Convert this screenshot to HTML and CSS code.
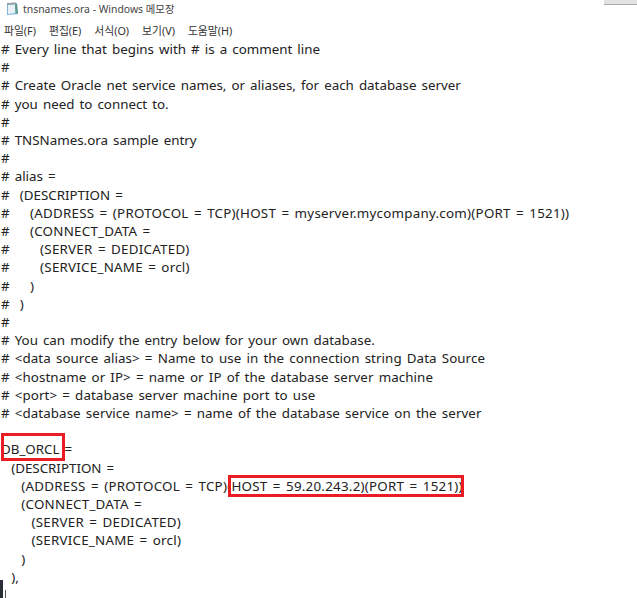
FILE: index.html
```html
<!DOCTYPE html>
<html lang="ko">
<head>
    <meta charset="UTF-8">
    <title>tnsnames.ora - Windows 메모장</title>
    <link rel="stylesheet" href="styles.css">
</head>
<body>
    <header class="titlebar">
        <svg class="app-icon" width="14" height="14" viewBox="0 0 14 14">
            <path d="M2 2 L12 1 L13 12 L2 13 Z" fill="#7fb4dc"/>
            <path d="M3 3 L10 2.500 L10.500 11 L3 12 Z" fill="#e8f1f6"/>
            <path d="M10 2.500 L12 2 L13 12 L10.500 11 Z" fill="#5f9a8c"/>
            <path d="M2 1 L11 0.500 L11 2 L2 2.500 Z" fill="#9a9a9a"/>
        </svg>
        <span class="title">tnsnames.ora - Windows 메모장</span>
        <span class="title-close"></span>
    </header>
    <nav class="menu">
        <span>파일(F)</span>
        <span>편집(E)</span>
        <span>서식(O)</span>
        <span>보기(V)</span>
        <span>도움말(H)</span>
    </nav>
    <main class="editor">
<pre class="text"># Every line that begins with # is a comment line
#
# Create Oracle net service names, or aliases, for each database server
# you need to connect to.
#
# TNSNames.ora sample entry
#
# alias =
#  (DESCRIPTION =
#    <span class="cfg">(ADDRESS = (PROTOCOL = TCP)(HOST = myserver.mycompany.com)(PORT = 1521))</span>
#    <span class="cfg">(CONNECT_DATA =</span>
#      <span class="cfg">(SERVER = DEDICATED)</span>
#      <span class="cfg">(SERVICE_NAME = orcl)</span>
#    )
#  )
#
# You can modify the entry below for your own database.
<span class="wide"># &lt;data source alias&gt; = Name to use in the connection string Data Source</span>
<span class="wide"># &lt;hostname or IP&gt; = name or IP of the database server machine</span>
<span class="wide"># &lt;port&gt; = database server machine port to use</span>
<span class="wide"># &lt;database service name&gt; = name of the database service on the server</span>

DB_ORCL =
  (DESCRIPTION =
    <span class="cfg">(ADDRESS = (PROTOCOL = TCP)(HOST = 59.20.243.2)(PORT = 1521))</span>
    <span class="cfg">(CONNECT_DATA =</span>
      <span class="cfg">(SERVER = DEDICATED)</span>
      <span class="cfg">(SERVICE_NAME = orcl)</span>
    )
  ),</pre>
        <div class="mark mark-db"></div>
        <div class="mark mark-host"></div>
    </main>
    <div class="cursor-bar"></div>
    <div class="cursor-line"></div>
</body>
</html>
```

FILE: styles.css
```css
html, body {
    margin: 0;
    height: 598px;
    overflow: hidden;
    background: #ffffff;
}
body {
    position: relative;
    font-family: "Noto Sans", "Noto Sans CJK KR", sans-serif;
    color: #222222;
}

.titlebar {
    display: flex;
    align-items: flex-start;
    height: 20px;
    padding: 2px 0 0 5px;
    box-sizing: border-box;
}
.app-icon {
    flex: none;
}
.title {
    margin-left: 4px;
    font-size: 10.4px;
    line-height: 15px;
    color: #444444;
}
.title-close {
    margin: -2px 0 0 auto;
    width: 33px;
    height: 5px;
    background: #e2e2e2;
    border-bottom: 1px solid #a8a8a8;
    box-sizing: border-box;
}

.menu {
    display: flex;
    gap: 13px;
    height: 20px;
    padding: 3px 0 0 4px;
    box-sizing: border-box;
    font-size: 10.8px;
    line-height: 16px;
    color: #333333;
}

.editor {
    position: relative;
}
.text {
    margin: 0;
    padding: 0 0 0 1px;
    font-family: "Noto Sans", sans-serif;
    font-size: 13.35px;
    word-spacing: 1.6px;
    line-height: 18.2px;
    color: #222222;
    white-space: pre;
}
.cfg {
    letter-spacing: 0.25px;
}
.wide {
    letter-spacing: 0.07px;
}

.mark {
    position: absolute;
    border: 3px solid #ec1c24;
    box-sizing: border-box;
}
.mark-db {
    left: 1px;
    top: 393px;
    width: 64px;
    height: 28px;
}
.mark-host {
    left: 228px;
    top: 435px;
    width: 236px;
    height: 22px;
}

.cursor-bar {
    position: absolute;
    left: 0;
    bottom: 0;
    width: 3px;
    height: 18px;
    background: #2b3038;
}
.cursor-line {
    position: absolute;
    left: 5px;
    bottom: 0;
    width: 1px;
    height: 8px;
    background: #555555;
}
```
